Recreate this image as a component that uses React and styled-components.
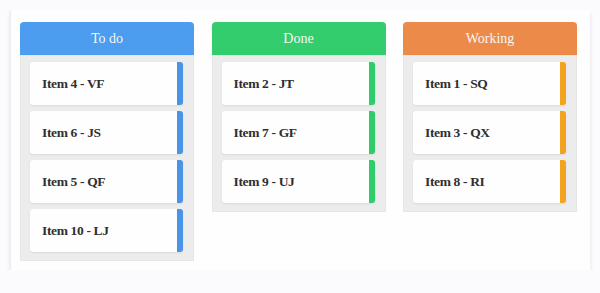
import React from "react";
import styled, { createGlobalStyle } from "styled-components";

const Global = createGlobalStyle`
  html, body { margin: 0; padding: 0; background: #fbfafc; }
  body { font-family: "Liberation Serif", "Times New Roman", serif; }
`;

const Board = styled.div`
  box-sizing: border-box;
  margin: 10px 10px 0 10px;
  width: 580px;
  height: 260px;
  background: #fefefe;
  padding: 12px 13px 0 9px;
  border-left: 1px solid #ececec;
  box-shadow: 0 3px 4px rgba(0, 0, 0, 0.1);
  display: grid;
  grid-template-columns: repeat(3, 174px);
  column-gap: 17.5px;
  align-items: start;
`;

const Column = styled.section`
  display: flex;
  flex-direction: column;
`;

const Header = styled.div`
  height: 33px;
  line-height: 33px;
  border-radius: 4px 4px 0 0;
  background: ${(p) => p.$color};
  color: #f4f7f4;
  text-align: center;
  font-size: 14px;
`;

const List = styled.div`
  background: #ececec;
  padding: 7px 11px 9px 10px;
  display: flex;
  flex-direction: column;
  gap: 6px;
  box-shadow: inset 0 0 0 1px #e6e6e6;
`;

const Card = styled.div`
  box-sizing: border-box;
  height: 43px;
  display: flex;
  align-items: center;
  padding-left: 12px;
  background: #fefefe;
  border-right: 6px solid ${(p) => p.$color};
  border-radius: 3px;
  box-shadow: 0 1px 2px rgba(0, 0, 0, 0.08);
  font-family: "Liberation Serif", "Times New Roman", serif;
  font-weight: bold;
  font-size: 13.5px;
  letter-spacing: -0.35px;
  color: #2f2f2f;
`;

const columns = [
  { title: "To do", head: "#4c9cf0", strip: "#4a94e8", items: ["Item 4 - VF", "Item 6 - JS", "Item 5 - QF", "Item 10 - LJ"] },
  { title: "Done", head: "#33cd6d", strip: "#2fcc6a", items: ["Item 2 - JT", "Item 7 - GF", "Item 9 - UJ"] },
  { title: "Working", head: "#ec8a4a", strip: "#f2a421", items: ["Item 1 - SQ", "Item 3 - QX", "Item 8 - RI"] },
];

export default function App() {
  return (
    <>
      <Global />
      <Board>
        {columns.map((c) => (
          <Column key={c.title}>
            <Header $color={c.head}>{c.title}</Header>
            <List>
              {c.items.map((it) => (
                <Card key={it} $color={c.strip}>{it}</Card>
              ))}
            </List>
          </Column>
        ))}
      </Board>
    </>
  );
}
